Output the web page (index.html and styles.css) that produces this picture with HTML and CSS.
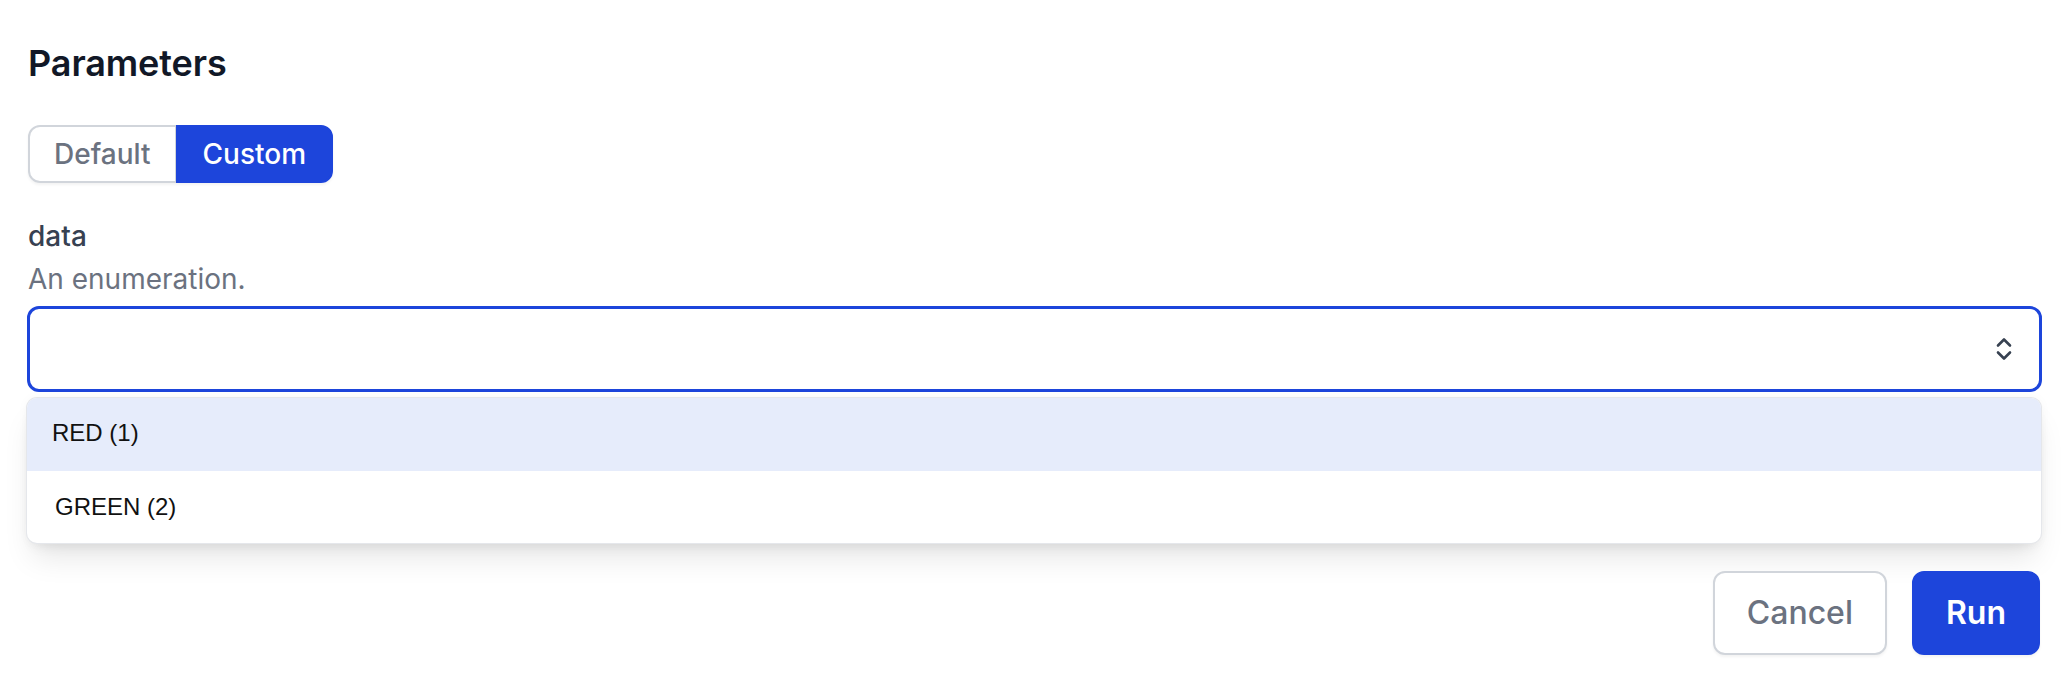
FILE: index.html
```html
<!DOCTYPE html>
<html lang="en">
<head>
<meta charset="utf-8">
<title>Parameters</title>
<link rel="stylesheet" href="styles.css">
</head>
<body>
<div class="panel">
  <h2 class="title">Parameters</h2>
  <div class="toggle">
    <button class="toggle-btn">Default</button>
    <button class="toggle-btn active">Custom</button>
  </div>
  <div class="field">
    <div class="label">data</div>
    <div class="desc">An enumeration.</div>
    <div class="select">
      <span class="select-value"></span>
      <svg class="chev" width="18" height="26" viewBox="0 0 18 26" aria-hidden="true">
        <polyline points="3,9.5 9,3.5 15,9.5" fill="none" stroke="#374151" stroke-width="2.6" stroke-linecap="round" stroke-linejoin="round"/>
        <polyline points="3,16.5 9,22.5 15,16.5" fill="none" stroke="#374151" stroke-width="2.6" stroke-linecap="round" stroke-linejoin="round"/>
      </svg>
    </div>
    <ul class="menu">
      <li class="option selected">RED (1)</li>
      <li class="option second">GREEN (2)</li>
    </ul>
  </div>
  <div class="footer">
    <button class="btn btn-cancel">Cancel</button>
    <button class="btn btn-run">Run</button>
  </div>
</div>
</body>
</html>
```
FILE: styles.css
```css
* { box-sizing: border-box; }
html, body { margin: 0; padding: 0; background: #ffffff; }
body {
  font-family: Inter, "Noto Sans", "Liberation Sans", sans-serif;
  width: 2072px;
  height: 678px;
  overflow: hidden;
}
.panel {
  padding: 35px 30px 0 28px;
}
.title {
  margin: 0;
  font-size: 36px;
  line-height: 56px;
  font-weight: 600;
  color: #111827;
  letter-spacing: -0.1px;
}
.toggle {
  margin-top: 34px;
  display: inline-flex;
  border-radius: 12px;
  box-shadow: 0 2px 3px rgba(0,0,0,0.05);
}
.toggle-btn {
  font-family: inherit;
  font-size: 28px;
  line-height: 40px;
  font-weight: 500;
  padding: 7px 24px;
  border: 2px solid #d1d5db;
  background: #fff;
  color: #6b7280;
  margin: 0;
  cursor: pointer;
}
.toggle-btn:first-child {
  border-radius: 12px 0 0 12px;
  border-right: 1px solid #d1d5db;
  padding-right: 24px;
}
.toggle-btn.active {
  background: #1d45db;
  border-color: #1d45db;
  color: #ffffff;
  border-radius: 0 12px 12px 0;
  padding: 7px 25px 7px 25px;
}
.field {
  margin-top: 33px;
}
.label {
  font-size: 28px;
  line-height: 40px;
  font-weight: 500;
  color: #374151;
}
.desc {
  margin-top: 3px;
  font-size: 28px;
  line-height: 40px;
  color: #6b7280;
}
.select {
  margin-top: 7px;
  margin-left: -1px;
  height: 86px;
  border: 3px solid #1d45db;
  border-radius: 12px;
  display: flex;
  align-items: center;
  justify-content: space-between;
  padding: 0 26px 0 24px;
  background: #fff;
}
.chev { display: block; }
.menu {
  list-style: none;
  margin: 6px 1px 0 -1px;
  padding: 0;
  border-radius: 10px;
  background: #fff;
  box-shadow: 0 0 0 1px #e5e7eb, 0 20px 30px -6px rgba(0,0,0,0.10), 0 8px 14px -6px rgba(0,0,0,0.08), 0 0 12px rgba(0,0,0,0.04);
  overflow: hidden;
}
.option {
  font-family: "Liberation Sans", Arial, sans-serif;
  font-size: 24px;
  color: #111111;
  height: 72px;
  display: flex;
  align-items: center;
  padding-left: 25px;
}
.option.selected {
  background: #e6ecfb;
  height: 73px;
  padding-bottom: 4px;
}
.option.second {
  padding-left: 28px;
}
.footer {
  margin-top: 28px;
  display: flex;
  justify-content: flex-end;
  gap: 25px;
  padding-right: 2px;
}
.btn {
  font-family: inherit;
  font-size: 32px;
  line-height: 48px;
  font-weight: 500;
  padding: 16px 32px;
  border-radius: 12px;
  border: 2px solid #d1d5db;
  margin: 0;
  box-shadow: 0 2px 3px rgba(0,0,0,0.05);
  cursor: pointer;
}
.btn-cancel {
  background: #fff;
  color: #6b7280;
}
.btn-run {
  background: #1d45db;
  border-color: #1d45db;
  color: #fff;
  font-weight: 600;
  padding: 16px 32px;
}
```
